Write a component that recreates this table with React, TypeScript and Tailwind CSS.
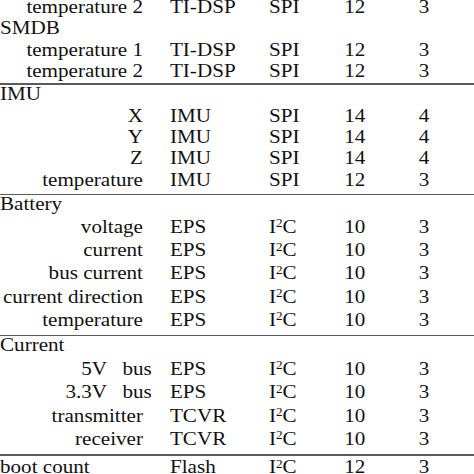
type Row =
  | { kind: "head"; label: string; h: string }
  | {
      kind: "spi" | "i2c";
      label: string;
      dev: string;
      bits: string;
      n: string;
      left?: boolean;
      split?: [string, string];
    };

type Section = { rows: Row[]; lineGap: string };

const sections: Section[] = [
  {
    lineGap: "mt-0",
    rows: [
      { kind: "spi", label: "temperature 2", dev: "TI-DSP", bits: "12", n: "3" },
      { kind: "head", label: "SMDB", h: "h-[22px]" },
      { kind: "spi", label: "temperature 1", dev: "TI-DSP", bits: "12", n: "3" },
      { kind: "spi", label: "temperature 2", dev: "TI-DSP", bits: "12", n: "3" },
    ],
  },
  {
    lineGap: "mt-[1.8px]",
    rows: [
      { kind: "head", label: "IMU", h: "h-[22.4px]" },
      { kind: "spi", label: "X", dev: "IMU", bits: "14", n: "4" },
      { kind: "spi", label: "Y", dev: "IMU", bits: "14", n: "4" },
      { kind: "spi", label: "Z", dev: "IMU", bits: "14", n: "4" },
      { kind: "spi", label: "temperature", dev: "IMU", bits: "12", n: "3" },
    ],
  },
  {
    lineGap: "mt-[3px]",
    rows: [
      { kind: "head", label: "Battery", h: "h-[20.5px]" },
      { kind: "i2c", label: "voltage", dev: "EPS", bits: "10", n: "3" },
      { kind: "i2c", label: "current", dev: "EPS", bits: "10", n: "3" },
      { kind: "i2c", label: "bus current", dev: "EPS", bits: "10", n: "3" },
      { kind: "i2c", label: "current direction", dev: "EPS", bits: "10", n: "3" },
      { kind: "i2c", label: "temperature", dev: "EPS", bits: "10", n: "3" },
    ],
  },
  {
    lineGap: "mt-[3.5px]",
    rows: [
      { kind: "head", label: "Current", h: "h-[21.3px]" },
      { kind: "i2c", label: "", split: ["5V", "bus"], dev: "EPS", bits: "10", n: "3" },
      { kind: "i2c", label: "", split: ["3.3V", "bus"], dev: "EPS", bits: "10", n: "3" },
      { kind: "i2c", label: "transmitter", dev: "TCVR", bits: "10", n: "3" },
      { kind: "i2c", label: "receiver", dev: "TCVR", bits: "10", n: "3" },
    ],
  },
  {
    lineGap: "",
    rows: [{ kind: "i2c", label: "boot count", dev: "Flash", bits: "12", n: "3", left: true }],
  },
];

function Bus({ i2c }: { i2c: boolean }) {
  if (!i2c) return <>SPI</>;
  return (
    <>
      I<span className="relative -top-[5.5px] text-[12px]">2</span>C
    </>
  );
}

function TableRow({ row }: { row: Row }) {
  if (row.kind === "head") {
    return <div className={`${row.h} whitespace-nowrap`}>{row.label}</div>;
  }
  const i2c = row.kind === "i2c";
  return (
    <div className={`flex whitespace-nowrap ${i2c ? "h-[23.3px] pt-[2.3px]" : "h-[21.2px]"}`}>
      <div className={`flex w-[130px] ${row.left ? "justify-start" : "justify-end"}`}>
        {row.split ? (
          <span className="-mr-[8px]">
            {row.split[0]}
            <span className="ml-[14px]">{row.split[1]}</span>
          </span>
        ) : (
          <span>{row.label}</span>
        )}
      </div>
      <div className="ml-[24.5px] w-[90px]">{row.dev}</div>
      <div className="w-[58px]">
        <Bus i2c={i2c} />
      </div>
      <div className="w-[40px] text-center">{row.bits}</div>
      <div className="ml-[23px] w-[40px] text-center">{row.n}</div>
    </div>
  );
}

export default function App() {
  return (
    <div className="h-[474px] w-[474px] overflow-hidden bg-white">
      <div className="w-[431px] origin-top-left scale-x-[1.1] -mt-[2.3px] font-['Liberation_Serif','Times_New_Roman',serif] text-[19.2px] leading-[17px] text-[#111111]">
        {sections.map((s, i) => (
          <div key={i}>
            {s.rows.map((r, j) => (
              <TableRow key={j} row={r} />
            ))}
            {i < sections.length - 1 && <div className={`${s.lineGap} h-[1.4px] bg-[#5a5a5a]`} />}
          </div>
        ))}
      </div>
    </div>
  );
}
